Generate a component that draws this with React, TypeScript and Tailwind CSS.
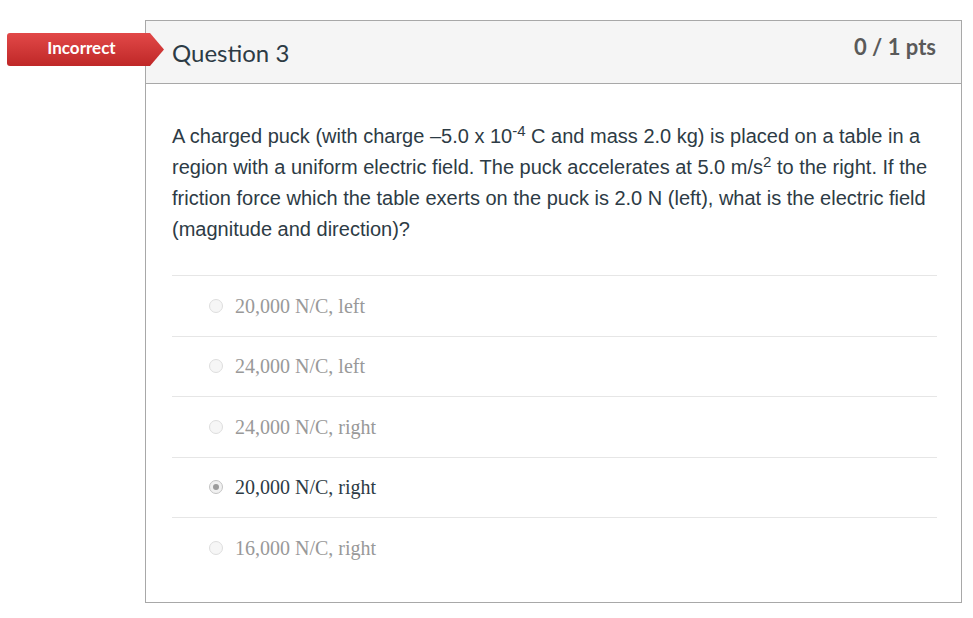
import React from 'react';

type Answer = {
  label: string;
  selected?: boolean;
};

const answers: Answer[] = [
  { label: '20,000 N/C, left' },
  { label: '24,000 N/C, left' },
  { label: '24,000 N/C, right' },
  { label: '20,000 N/C, right', selected: true },
  { label: '16,000 N/C, right' },
];

function Radio({ checked }: { checked?: boolean }) {
  return (
    <span
      className={`flex h-[14px] w-[14px] shrink-0 items-center justify-center rounded-full border ${
        checked ? 'border-[#c4c4c4] bg-[#f1f1f1]' : 'border-[#dedede] bg-[#f6f6f6]'
      }`}
    >
      {checked && <span className="h-[6px] w-[6px] rounded-full bg-[#9c9c9c]" />}
    </span>
  );
}

export default function App() {
  return (
    <div className="relative min-h-[618px] bg-white pt-[20px]">
      {/* Incorrect badge */}
      <div className="absolute left-[7px] top-[33px] flex h-[33px] w-[157px] items-center rounded-l-[3px] bg-gradient-to-b from-[#e24848] to-[#bf2727] pl-[6px] pr-[14px] [clip-path:polygon(0_0,calc(100%-14px)_0,100%_50%,calc(100%-14px)_100%,0_100%)]">
        <span className="-mt-[3px] w-full text-center font-['Lato',sans-serif] text-[17px] font-bold text-white">
          Incorrect
        </span>
      </div>

      <div className="ml-[145px] w-[817px] border border-[#a8a8a8]">
        {/* Header */}
        <div className="flex h-[63px] justify-between border-b border-[#a8a8a8] bg-[#f5f5f5] pl-[26px] pr-[25px] font-['Lato',sans-serif]">
          <h2 className="pt-[17px] text-[24px] leading-[29px] text-[#2d3b45]">Question 3</h2>
          <div className="pt-[13px] text-[22px] font-bold leading-[26px] text-[#5a5a5a]">0 / 1 pts</div>
        </div>

        {/* Body */}
        <div className="pb-[24px] pl-[26px] pr-[24px] pt-[37px]">
          <p className="font-['Liberation_Sans',Arial,sans-serif] text-[20px] leading-[31px] text-[#2d3b45]">
            A charged puck (with charge –5.0 x 10<sup>-4</sup> C and mass 2.0 kg) is placed on a table in a
            region with a uniform electric field. The puck accelerates at 5.0 m/s<sup>2</sup> to the right. If the
            friction force which the table exerts on the puck is 2.0 N (left), what is the electric field
            (magnitude and direction)?
          </p>

          <div className="mt-[30px]">
            {answers.map((a) => (
              <div
                key={a.label}
                className="flex h-[60.5px] items-center border-t border-[#e6e6e6] pl-[37px]"
              >
                <Radio checked={a.selected} />
                <span
                  className={`ml-[12px] font-['Liberation_Serif','Times_New_Roman',serif] text-[20px] ${
                    a.selected ? 'text-[#2d3b45]' : 'text-[#999999]'
                  }`}
                >
                  {a.label}
                </span>
              </div>
            ))}
          </div>
        </div>
      </div>
    </div>
  );
}
